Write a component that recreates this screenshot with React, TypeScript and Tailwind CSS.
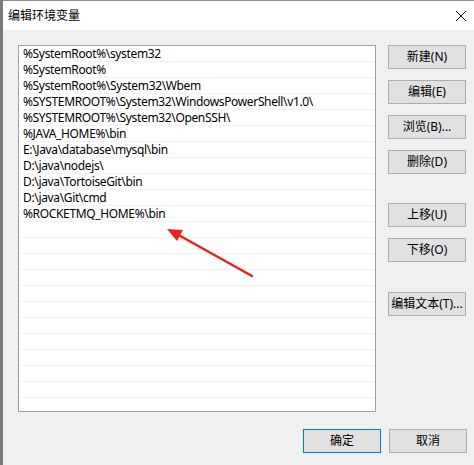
const PATHS = [
  '%SystemRoot%\\system32',
  '%SystemRoot%',
  '%SystemRoot%\\System32\\Wbem',
  '%SYSTEMROOT%\\System32\\WindowsPowerShell\\v1.0\\',
  '%SYSTEMROOT%\\System32\\OpenSSH\\',
  '%JAVA_HOME%\\bin',
  'E:\\Java\\database\\mysql\\bin',
  'D:\\java\\nodejs\\',
  'D:\\java\\TortoiseGit\\bin',
  'D:\\java\\Git\\cmd',
  '%ROCKETMQ_HOME%\\bin',
];

const FONT = "font-['Segoe_UI','Noto_Sans','Noto_Sans_CJK_SC',sans-serif]";

function Btn({ label, primary }: { label: string; primary?: boolean }) {
  return (
    <div
      className={`w-[78px] h-[24px] flex items-center justify-center text-[12px] text-black bg-[#e1e1e1] border ${
        primary ? 'border-[#0078d7]' : 'border-[#adadad]'
      }`}
    >
      {label}
    </div>
  );
}

export default function App() {
  // pad the list with empty rows so the grid lines fill the box
  const rows = [...PATHS, ...Array(12).fill('')];

  return (
    <div className={`w-[474px] h-[465px] flex bg-[#6e6e6e] overflow-hidden ${FONT}`}>
      {/* window behind */}
      <div className="w-[3px] bg-[#7a7a7a]" />

      <div className="flex-1 flex flex-col bg-[#f0f0f0] border-t border-[#8a8a8a] relative">
        {/* Title bar */}
        <div className="h-[29px] bg-white flex items-center justify-between pl-[5px] pr-[6px]">
          <span className="text-[12px] text-black">编辑环境变量</span>
          <svg width="12" height="12" viewBox="0 0 12 12" className="mr-[1px]">
            <path d="M1 1 L11 11 M11 1 L1 11" stroke="#111" strokeWidth="1" />
          </svg>
        </div>

        {/* Body */}
        <div className="flex pt-[15px] pl-[15px]">
          <div className="w-[358px] h-[367px] bg-white border border-[#a0a0a0] overflow-hidden">
            {rows.map((p, i) => (
              <div
                key={i}
                className="h-[16px] leading-[16px] pl-[4px] text-[12px] tracking-[-0.35px] text-black border-b border-[#f3f3f3] whitespace-nowrap"
              >
                {p}
              </div>
            ))}
          </div>

          <div className="ml-[12px] flex flex-col">
            <div className="flex flex-col gap-[11px]">
              <Btn label="新建(N)" />
              <Btn label="编辑(E)" />
              <Btn label="浏览(B)..." />
              <Btn label="删除(D)" />
            </div>
            <div className="flex flex-col gap-[11px] mt-[29px]">
              <Btn label="上移(U)" />
              <Btn label="下移(O)" />
            </div>
            <div className="mt-[30px]">
              <Btn label="编辑文本(T)..." />
            </div>
          </div>
        </div>

        {/* Footer */}
        <div className="flex justify-end gap-[8px] pr-[7px] mt-[17px]">
          <Btn label="确定" primary />
          <Btn label="取消" />
        </div>

        {/* red annotation arrow */}
        <svg className="absolute left-0 top-0 pointer-events-none" width="471" height="465">
          <path d="M249 275 L172 232" stroke="#e8201f" strokeWidth="2.5" strokeLinecap="round" />
          <path d="M164 228 L180 229 L174 240 Z" fill="#e8201f" />
        </svg>
      </div>
    </div>
  );
}
